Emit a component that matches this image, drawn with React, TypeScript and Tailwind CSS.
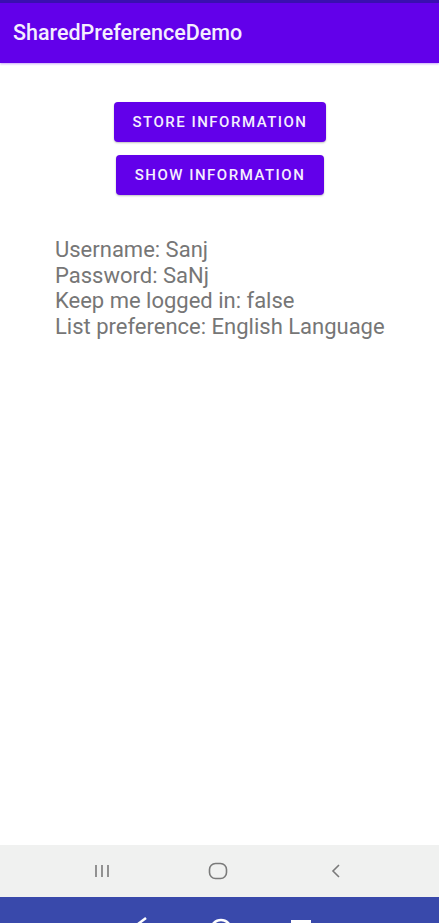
import React from "react";

const lines = [
  "Username: Sanj",
  "Password: SaNj",
  "Keep me logged in: false",
  "List preference: English Language",
];

export default function App() {
  return (
    <div
      className="w-[439px] h-[923px] flex flex-col bg-white overflow-hidden"
      style={{ fontFamily: "Roboto, 'Liberation Sans', sans-serif" }}
    >
      {/* status strip + toolbar */}
      <div className="h-[3px] bg-[#3a0fb0]" />
      <div className="h-[60px] bg-[#6200ea] flex items-center px-[13px] shadow-[0_1px_2px_rgba(98,0,234,0.35)]">
        <span className="text-[#f4eefe] text-[21.5px] font-medium">
          SharedPreferenceDemo
        </span>
      </div>

      {/* content */}
      <div className="flex-1 flex flex-col">
        <div className="flex flex-col items-center pt-[39px] gap-[13px]">
          <button className="w-[212px] h-[40px] rounded-[4px] bg-[#6200ea] text-[#f4eefe] text-[15px] font-medium tracking-[1.5px] shadow-[0_1px_2px_rgba(0,0,0,0.25)] ml-[1px]">
            STORE INFORMATION
          </button>
          <button className="w-[208px] h-[40px] rounded-[4px] bg-[#6200ea] text-[#f4eefe] text-[15px] font-medium tracking-[1.5px] shadow-[0_1px_2px_rgba(0,0,0,0.25)] ml-[1px]">
            SHOW INFORMATION
          </button>
        </div>
        <div className="pl-[55px] pt-[42px] flex flex-col text-[22px] leading-[25.5px] text-[#767676]">
          {lines.map((l) => (
            <div key={l}>{l}</div>
          ))}
        </div>
      </div>

      {/* system navigation bar */}
      <div className="h-[52px] bg-[#f0f1f0] flex items-center justify-between pl-[93px] pr-[96px]">
        <svg width="18" height="16" viewBox="0 0 18 16">
          <g stroke="#7a7a7a" strokeWidth="1.6">
            <line x1="3" y1="2" x2="3" y2="14" />
            <line x1="9" y1="2" x2="9" y2="14" />
            <line x1="15" y1="2" x2="15" y2="14" />
          </g>
        </svg>
        <svg width="20" height="18" viewBox="0 0 20 18" className="mr-[4px]">
          <rect x="1.5" y="1.5" width="17" height="15" rx="6" fill="none" stroke="#7a7a7a" strokeWidth="1.6" />
        </svg>
        <svg width="14" height="16" viewBox="0 0 14 16">
          <polyline points="10,2 4,8 10,14" fill="none" stroke="#7a7a7a" strokeWidth="1.6" />
        </svg>
      </div>

      {/* lower host navigation bar, cut at the bottom edge */}
      <div className="h-[26px] bg-[#3949ab] relative overflow-hidden">
        <svg className="absolute left-[132px] top-[20px]" width="18" height="14" viewBox="0 0 18 14">
          <polyline points="14,1 6,7" fill="none" stroke="white" strokeWidth="2.5" />
        </svg>
        <svg className="absolute left-[208px] top-[20px]" width="26" height="14" viewBox="0 0 26 14">
          <circle cx="13" cy="13" r="10" fill="none" stroke="white" strokeWidth="2.5" />
        </svg>
        <div className="absolute left-[291px] top-[23px] w-[20px] h-[4px] bg-white" />
      </div>
    </div>
  );
}
